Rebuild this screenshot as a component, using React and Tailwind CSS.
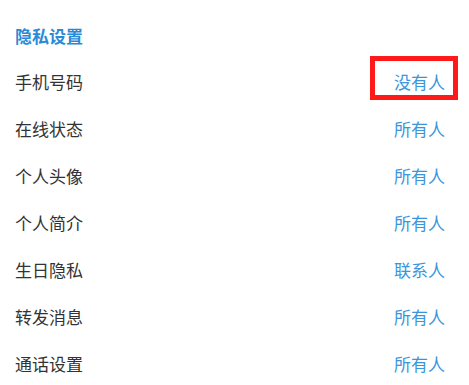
import React from "react";

const rows = [
  { label: "手机号码", value: "没有人", marked: true },
  { label: "在线状态", value: "所有人" },
  { label: "个人头像", value: "所有人" },
  { label: "个人简介", value: "所有人" },
  { label: "生日隐私", value: "联系人" },
  { label: "转发消息", value: "所有人" },
  { label: "通话设置", value: "所有人" },
];

export default function App() {
  return (
    <div
      className="w-[469px] h-[385px] bg-white overflow-hidden pt-[13px]"
      style={{ fontFamily: '"Noto Sans CJK SC", "Noto Sans", sans-serif' }}
    >
      <div className="h-[45px] flex items-center pl-[15px] text-[17px] font-bold text-[#2a8ad6]">
        隐私设置
      </div>
      {rows.map((r) => (
        <div key={r.label} className="relative h-[47px] flex items-center justify-between pl-[15px] pr-[24px]">
          <span className="text-[17px] text-[#333333]">{r.label}</span>
          <span className="text-[17px] text-[#3a95dc]">{r.value}</span>
          {r.marked && (
            <div className="absolute left-[370px] top-[-2px] w-[88px] h-[44px] border-[5px] border-[#ff1a1a]" />
          )}
        </div>
      ))}
    </div>
  );
}
